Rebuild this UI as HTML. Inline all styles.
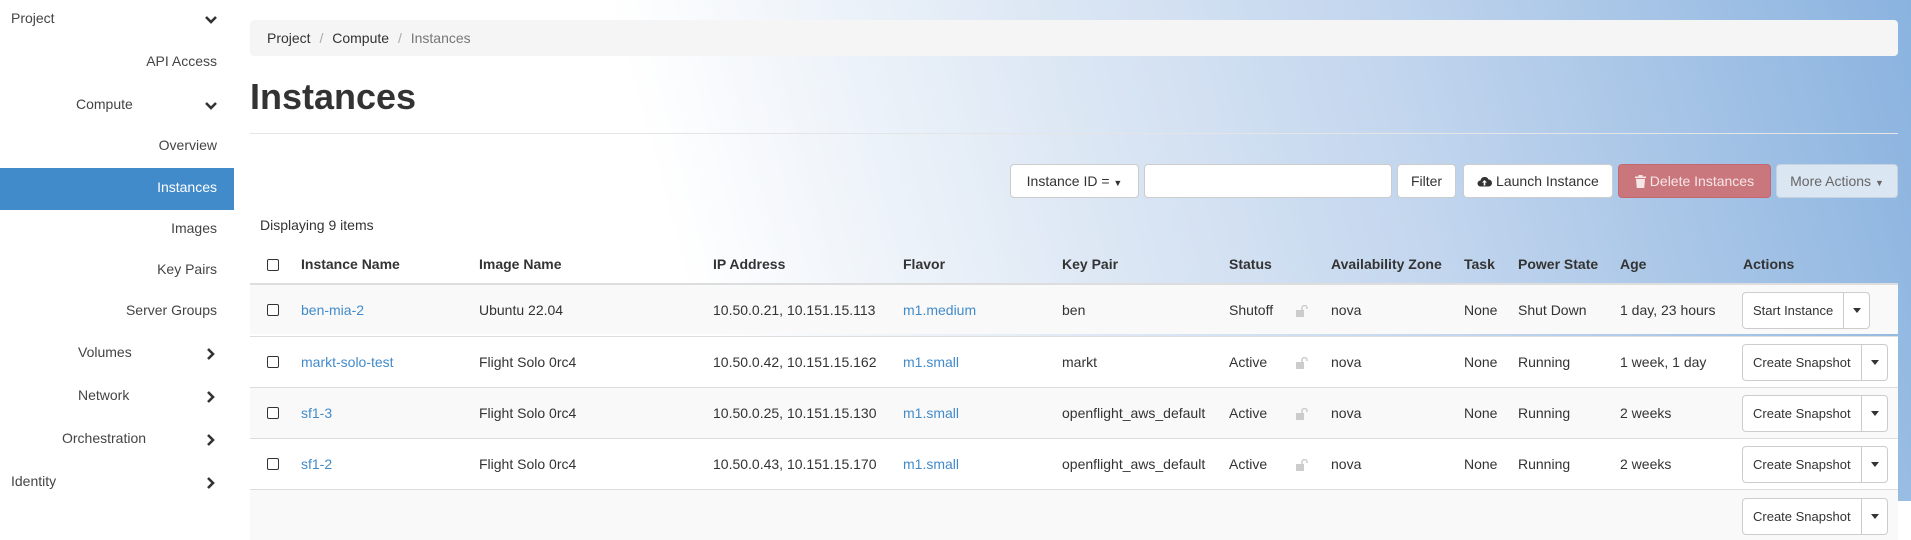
<!DOCTYPE html>
<html><head><meta charset="utf-8"><style>
*{box-sizing:border-box;margin:0;padding:0}
body{width:1911px;height:501px;overflow:hidden;font-family:"Liberation Sans",sans-serif;font-size:14px;color:#333;position:relative;background:#fff}
#side{position:absolute;left:0;top:0;width:234px;height:501px;background:#fff}
.s{position:absolute;font-size:14px;color:#444}
.r{right:17px;text-align:right}
.chev{position:absolute;left:204px;width:14px;height:14px}
#main{position:absolute;left:234px;top:0;right:0;height:501px;background:linear-gradient(75deg,#ffffff 0%,#ffffff 28%,#dfe9f5 50%,#c3d6ee 70%,#8ab3df 100%)}
.a{position:absolute}
.btn{position:absolute;top:164px;height:34px;border:1px solid #ccc;border-radius:4px;background:#fff;font-size:14px;line-height:32px;text-align:center;color:#333}
.th{position:absolute;top:256px;font-weight:bold;font-size:14px;color:#333}
.row{position:absolute;left:250px;width:1648px;height:51px;border-top:1px solid #ddd}
.c{position:absolute;top:17px;font-size:14px;color:#333}
.lnk{color:#428bca}
.cb{position:absolute;left:17px;width:12px;height:12px;border:1px solid #333;border-radius:2px;background:#fff}
.ab{position:absolute;left:1492px;top:7px;height:37px;border:1px solid #ccc;border-radius:4px;background:#fff;font-size:13px;line-height:35px;color:#333}
.ab span{display:inline-block;padding:0 10px}
.ab i{display:inline-block;border-left:1px solid #ccc;width:26px;height:35px;vertical-align:top;position:relative}
.ab i:after{content:"";position:absolute;left:9px;top:15px;border:4px solid transparent;border-top:5px solid #333}
.lock{position:absolute;left:1046px;top:20px;width:12px;height:12px}
</style></head><body>
<div id="side">
<div class="s" style="left:11px;top:10px">Project</div>
<svg class="chev" style="top:13px" viewBox="0 0 14 14"><path d="M2 4l5 5 5-5" fill="none" stroke="#333" stroke-width="2.6"/></svg>
<div class="s r" style="top:53px">API Access</div>
<div class="s" style="left:76px;top:96px">Compute</div>
<svg class="chev" style="top:99px" viewBox="0 0 14 14"><path d="M2 4l5 5 5-5" fill="none" stroke="#333" stroke-width="2.6"/></svg>
<div class="s r" style="top:137px">Overview</div>
<div style="position:absolute;left:0;top:168px;width:234px;height:42px;background:#428bca"></div>
<div class="s r" style="top:179px;color:#fff">Instances</div>
<div class="s r" style="top:220px">Images</div>
<div class="s r" style="top:261px">Key Pairs</div>
<div class="s r" style="top:302px">Server Groups</div>
<div class="s" style="left:78px;top:344px">Volumes</div>
<svg class="chev" style="top:347px" viewBox="0 0 14 14"><path d="M4 2l5 5-5 5" fill="none" stroke="#333" stroke-width="2.6"/></svg>
<div class="s" style="left:78px;top:387px">Network</div>
<svg class="chev" style="top:390px" viewBox="0 0 14 14"><path d="M4 2l5 5-5 5" fill="none" stroke="#333" stroke-width="2.6"/></svg>
<div class="s" style="left:62px;top:430px">Orchestration</div>
<svg class="chev" style="top:433px" viewBox="0 0 14 14"><path d="M4 2l5 5-5 5" fill="none" stroke="#333" stroke-width="2.6"/></svg>
<div class="s" style="left:11px;top:473px">Identity</div>
<svg class="chev" style="top:476px" viewBox="0 0 14 14"><path d="M4 2l5 5-5 5" fill="none" stroke="#333" stroke-width="2.6"/></svg>
</div>
<div id="main"></div>
<div class="a" style="left:250px;top:20px;width:1648px;height:36px;background:#f5f5f5;border-radius:4px;font-size:14px;line-height:36px;padding-left:17px;color:#333">Project <span style="color:#aaa;padding:0 5px">/</span> Compute <span style="color:#aaa;padding:0 5px">/</span> <span style="color:#777">Instances</span></div>
<div class="a" style="left:250px;top:76px;font-size:36px;font-weight:bold;color:#333">Instances</div>
<div class="a" style="left:250px;top:133px;width:1648px;height:1px;background:#e5e5e5"></div>
<div class="btn" style="left:1010px;width:129px">Instance ID = <span style="font-size:9px">▼</span></div>
<div class="btn" style="left:1144px;width:248px"></div>
<div class="btn" style="left:1397px;width:59px">Filter</div>
<div class="btn" style="left:1463px;width:150px"><svg width="15" height="12" viewBox="0 0 15 12" style="vertical-align:-1px"><path d="M3.5 11.5a3 3 0 010-6 4.2 4.2 0 018-1 3.5 3.5 0 010 7z" fill="#333"/><path d="M7.5 5l-2.5 2.5h1.7v3h1.6v-3h1.7z" fill="#fff"/></svg> Launch Instance</div>
<div class="btn" style="left:1618px;width:153px;background:#c9777d;border-color:#c4676e;color:#f7e6e7"><svg width="11" height="13" viewBox="0 0 11 13" style="vertical-align:-2px"><rect x="0" y="1.5" width="11" height="1.6" fill="#f7e6e7"/><rect x="3.5" y="0" width="4" height="2" fill="#f7e6e7"/><path d="M1 4h9l-.8 9H1.8z" fill="#f7e6e7"/></svg> Delete Instances</div>
<div class="btn" style="left:1776px;width:122px;background:#dbe6f3;border-color:#c6d2df;color:#666">More Actions <span style="font-size:9px">▼</span></div>
<div class="a" style="left:260px;top:217px;font-size:14px">Displaying 9 items</div>
<div class="cb" style="left:267px;top:259px"></div>
<div class="th" style="left:301px">Instance Name</div>
<div class="th" style="left:479px">Image Name</div>
<div class="th" style="left:713px">IP Address</div>
<div class="th" style="left:903px">Flavor</div>
<div class="th" style="left:1062px">Key Pair</div>
<div class="th" style="left:1229px">Status</div>
<div class="th" style="left:1331px">Availability Zone</div>
<div class="th" style="left:1464px">Task</div>
<div class="th" style="left:1518px">Power State</div>
<div class="th" style="left:1620px">Age</div>
<div class="th" style="left:1743px">Actions</div>

<div class="row" style="top:283px;border-top:2px solid #ddd;background:#f9f9f9">
<div class="cb" style="top:19px"></div><div class="c lnk" style="left:51px">ben-mia-2</div><div class="c" style="left:229px">Ubuntu 22.04</div><div class="c" style="left:463px">10.50.0.21, 10.151.15.113</div><div class="c lnk" style="left:653px">m1.medium</div><div class="c" style="left:812px">ben</div><div class="c" style="left:979px">Shutoff</div><svg class="lock" viewBox="0 0 12 12"><rect x="0" y="5" width="8" height="7" fill="#ccc"/><path d="M6 5V3a2.5 2.5 0 015 0v1" fill="none" stroke="#ccc" stroke-width="1.5"/></svg><div class="c" style="left:1081px">nova</div><div class="c" style="left:1214px">None</div><div class="c" style="left:1268px">Shut Down</div><div class="c" style="left:1370px">1 day, 23 hours</div>
<div class="ab"><span>Start Instance</span><i></i></div></div>

<div class="row" style="top:336px;background:#fff">
<div class="cb" style="top:19px"></div><div class="c lnk" style="left:51px">markt-solo-test</div><div class="c" style="left:229px">Flight Solo 0rc4</div><div class="c" style="left:463px">10.50.0.42, 10.151.15.162</div><div class="c lnk" style="left:653px">m1.small</div><div class="c" style="left:812px">markt</div><div class="c" style="left:979px">Active</div><svg class="lock" viewBox="0 0 12 12"><rect x="0" y="5" width="8" height="7" fill="#ccc"/><path d="M6 5V3a2.5 2.5 0 015 0v1" fill="none" stroke="#ccc" stroke-width="1.5"/></svg><div class="c" style="left:1081px">nova</div><div class="c" style="left:1214px">None</div><div class="c" style="left:1268px">Running</div><div class="c" style="left:1370px">1 week, 1 day</div>
<div class="ab"><span>Create Snapshot</span><i></i></div></div>

<div class="row" style="top:387px;background:#f9f9f9">
<div class="cb" style="top:19px"></div><div class="c lnk" style="left:51px">sf1-3</div><div class="c" style="left:229px">Flight Solo 0rc4</div><div class="c" style="left:463px">10.50.0.25, 10.151.15.130</div><div class="c lnk" style="left:653px">m1.small</div><div class="c" style="left:812px">openflight_aws_default</div><div class="c" style="left:979px">Active</div><svg class="lock" viewBox="0 0 12 12"><rect x="0" y="5" width="8" height="7" fill="#ccc"/><path d="M6 5V3a2.5 2.5 0 015 0v1" fill="none" stroke="#ccc" stroke-width="1.5"/></svg><div class="c" style="left:1081px">nova</div><div class="c" style="left:1214px">None</div><div class="c" style="left:1268px">Running</div><div class="c" style="left:1370px">2 weeks</div>
<div class="ab"><span>Create Snapshot</span><i></i></div></div>

<div class="row" style="top:438px;background:#fff">
<div class="cb" style="top:19px"></div><div class="c lnk" style="left:51px">sf1-2</div><div class="c" style="left:229px">Flight Solo 0rc4</div><div class="c" style="left:463px">10.50.0.43, 10.151.15.170</div><div class="c lnk" style="left:653px">m1.small</div><div class="c" style="left:812px">openflight_aws_default</div><div class="c" style="left:979px">Active</div><svg class="lock" viewBox="0 0 12 12"><rect x="0" y="5" width="8" height="7" fill="#ccc"/><path d="M6 5V3a2.5 2.5 0 015 0v1" fill="none" stroke="#ccc" stroke-width="1.5"/></svg><div class="c" style="left:1081px">nova</div><div class="c" style="left:1214px">None</div><div class="c" style="left:1268px">Running</div><div class="c" style="left:1370px">2 weeks</div>
<div class="ab"><span>Create Snapshot</span><i></i></div></div>

<div class="row" style="top:489px;background:#f9f9f9">
<div class="ab" style="top:8px"><span>Create Snapshot</span><i></i></div></div>
</body></html>
